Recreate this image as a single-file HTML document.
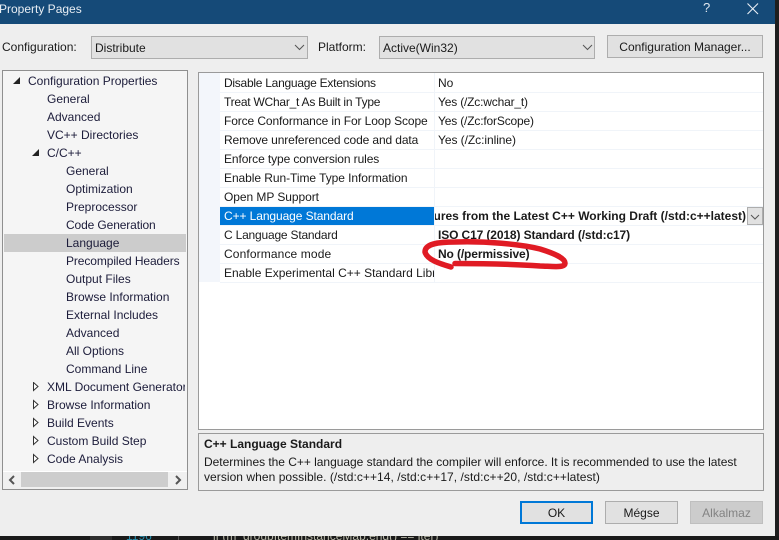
<!DOCTYPE html>
<html>
<head>
<meta charset="utf-8">
<style>
html,body{margin:0;padding:0;}
body{width:779px;height:540px;overflow:hidden;background:#1e1e1e;position:relative;font-family:"Liberation Sans",sans-serif;font-size:12px;color:#1a1a1a;}
div{position:absolute;box-sizing:border-box;white-space:nowrap;}
#dlg{left:0;top:0;width:775px;height:536px;background:#eeeeee;}
#title{left:0;top:0;width:775px;height:24px;background:#154a78;color:#e8eef4;line-height:18px;}
.dd{background:#e1e1e1;border:1px solid #adadad;height:23px;line-height:23px;}
.btn{background:#e1e1e1;border:1px solid #adadad;height:23px;line-height:23px;text-align:center;}
.t{line-height:18px;height:18px;color:#1c1c3a;}
.n{left:224px;line-height:19px;height:19px;}
.v{left:438px;line-height:19px;height:19px;}
.ln{left:220px;width:543px;height:1px;background:#f0f4f9;}
</style>
</head>
<body>
<div id="dlg"></div>
<div id="title"><span style="position:absolute;left:-1px;top:0;">Property Pages</span></div>
<div style="left:703px;top:0;color:#dfe7ef;line-height:16px;font-size:13px;">?</div>
<svg style="position:absolute;left:746px;top:2px;" width="14" height="14"><path d="M1.5 1.5L12 12M12 1.5L1.5 12" stroke="#e8eef4" stroke-width="1.1" fill="none"/></svg>

<div style="left:2px;top:38px;line-height:18px;">Configuration:</div>
<div class="dd" style="left:91px;top:36px;width:217px;padding-left:3px;">Distribute</div>
<svg style="position:absolute;left:294px;top:44px;" width="11" height="7"><path d="M1 1L5.5 5.5L10 1" stroke="#555" fill="none"/></svg>
<div style="left:318px;top:38px;line-height:18px;">Platform:</div>
<div class="dd" style="left:379px;top:36px;width:216px;padding-left:3px;">Active(Win32)</div>
<svg style="position:absolute;left:582px;top:44px;" width="11" height="7"><path d="M1 1L5.5 5.5L10 1" stroke="#555" fill="none"/></svg>
<div class="btn" style="left:607px;top:35px;width:156px;">Configuration Manager...</div>

<!-- tree -->
<div style="left:2px;top:70px;width:186px;height:420px;background:#f5f5f5;border:1px solid #8f8f8f;"></div>
<svg style="position:absolute;left:12px;top:77px;" width="9" height="8"><path d="M1 7H8V0Z" fill="#222"/></svg>
<svg style="position:absolute;left:31px;top:149px;" width="9" height="8"><path d="M1 7H8V0Z" fill="#222"/></svg>
<div class="t" style="left:28px;top:72px;">Configuration Properties</div>
<div class="t" style="left:47px;top:90px;">General</div>
<div class="t" style="left:47px;top:108px;">Advanced</div>
<div class="t" style="left:47px;top:126px;">VC++ Directories</div>
<div class="t" style="left:47px;top:144px;">C/C++</div>
<div class="t" style="left:66px;top:162px;">General</div>
<div class="t" style="left:66px;top:180px;">Optimization</div>
<div class="t" style="left:66px;top:198px;">Preprocessor</div>
<div class="t" style="left:66px;top:216px;letter-spacing:-.12px;">Code Generation</div>
<div style="left:4px;top:234px;width:182px;height:18px;background:#cccccc;"></div>
<div class="t" style="left:66px;top:234px;">Language</div>
<div class="t" style="left:66px;top:252px;letter-spacing:-.1px;">Precompiled Headers</div>
<div class="t" style="left:66px;top:270px;">Output Files</div>
<div class="t" style="left:66px;top:288px;">Browse Information</div>
<div class="t" style="left:66px;top:306px;">External Includes</div>
<div class="t" style="left:66px;top:324px;">Advanced</div>
<div class="t" style="left:66px;top:342px;">All Options</div>
<div class="t" style="left:66px;top:360px;">Command Line</div>
<div class="t" style="left:47px;top:378px;width:138px;overflow:hidden;">XML Document Generator</div>
<div class="t" style="left:47px;top:396px;">Browse Information</div>
<div class="t" style="left:47px;top:414px;">Build Events</div>
<div class="t" style="left:47px;top:432px;">Custom Build Step</div>
<div class="t" style="left:47px;top:450px;">Code Analysis</div>
<svg style="position:absolute;left:33px;top:382px;" width="6" height="90"><g fill="#fff" stroke="#333"><path d="M.5 .5L5 4.500L.5 8.500Z"/><path d="M.5 18.500L5 22.500L.5 26.500Z"/><path d="M.5 36.500L5 40.500L.5 44.500Z"/><path d="M.5 54.500L5 58.500L.5 62.500Z"/><path d="M.5 72.500L5 76.500L.5 80.500Z"/></g></svg>
<div style="left:3px;top:471px;width:184px;height:18px;background:#f0f0f0;border-top:1px solid #fff;"></div>
<div style="left:21px;top:472px;width:147px;height:15px;background:#cdcdcd;"></div>
<svg style="position:absolute;left:8px;top:475px;" width="8" height="10"><path d="M6 1L2 5L6 9" stroke="#555" stroke-width="2" fill="none"/></svg>
<svg style="position:absolute;left:174px;top:475px;" width="8" height="10"><path d="M2 1L6 5L2 9" stroke="#555" stroke-width="2" fill="none"/></svg>

<!-- grid -->
<div style="left:198px;top:72px;width:566px;height:358px;background:#fff;border:1px solid #9a9a9a;"></div>
<div style="left:199px;top:73px;width:21px;height:209px;background:#f3f6fb;"></div>
<div style="left:434px;top:73px;width:1px;height:209px;background:#f0f4f9;"></div>
<div class="ln" style="top:92px;"></div><div class="ln" style="top:111px;"></div><div class="ln" style="top:130px;"></div><div class="ln" style="top:149px;"></div><div class="ln" style="top:168px;"></div><div class="ln" style="top:187px;"></div><div class="ln" style="top:206px;"></div><div class="ln" style="top:225px;"></div><div class="ln" style="top:244px;"></div><div class="ln" style="top:263px;"></div><div class="ln" style="top:282px;"></div>
<div class="n" style="top:74px;letter-spacing:-.26px;">Disable Language Extensions</div><div class="v" style="top:74px;">No</div>
<div class="n" style="top:93px;letter-spacing:-.24px;">Treat WChar_t As Built in Type</div><div class="v" style="top:93px;letter-spacing:-.18px;">Yes (/Zc:wchar_t)</div>
<div class="n" style="top:112px;letter-spacing:-.11px;">Force Conformance in For Loop Scope</div><div class="v" style="top:112px;letter-spacing:-.17px;">Yes (/Zc:forScope)</div>
<div class="n" style="top:131px;letter-spacing:-.12px;">Remove unreferenced code and data</div><div class="v" style="top:131px;letter-spacing:-.06px;">Yes (/Zc:inline)</div>
<div class="n" style="top:150px;letter-spacing:-.1px;">Enforce type conversion rules</div>
<div class="n" style="top:169px;letter-spacing:-.06px;">Enable Run-Time Type Information</div>
<div class="n" style="top:188px;letter-spacing:-.06px;">Open MP Support</div>
<div style="left:220px;top:207px;width:214px;height:18px;background:#0078d7;"></div>
<div class="n" style="top:207px;color:#fff;letter-spacing:-.09px;">C++ Language Standard</div>
<div style="left:435px;top:207px;width:312px;height:18px;overflow:hidden;"><div style="right:1px;top:0;line-height:19px;font-weight:bold;">Preview - Features from the Latest C++ Working Draft (/std:c++latest)</div></div>
<div style="left:747px;top:207px;width:16px;height:18px;background:#e1e1e1;border:1px solid #adadad;"></div>
<svg style="position:absolute;left:750px;top:214px;" width="10" height="6"><path d="M1 1L5 5L9 1" stroke="#555" fill="none"/></svg>
<div class="n" style="top:226px;letter-spacing:-.2px;">C Language Standard</div><div class="v" style="top:226px;font-weight:bold;letter-spacing:-.12px;">ISO C17 (2018) Standard (/std:c17)</div>
<div class="n" style="top:245px;letter-spacing:.12px;">Conformance mode</div><div class="v" style="top:245px;font-weight:bold;letter-spacing:-.12px;">No (/permissive)</div>
<div class="n" style="top:264px;width:210px;overflow:hidden;">Enable Experimental C++ Standard Library Modules</div>

<svg style="position:absolute;left:415px;top:232px;" width="160" height="44"><path d="M36 35C26 32 12 28 10 20C10 12 22 10 40 10C70 9 105 12 125 17C138 21 150 26 150 31C150 36 140 34.500 125 34C90 31.500 60 31.500 40 31.500" fill="none" stroke="#e01b24" stroke-width="5.500" stroke-linecap="round" stroke-linejoin="round"/></svg>

<!-- description -->
<div style="left:198px;top:433px;width:566px;height:58px;border:1px solid #9a9a9a;background:#eeeeee;"></div>
<div style="left:204px;top:435px;line-height:18px;font-weight:bold;">C++ Language Standard</div>
<div style="left:204px;top:453px;line-height:18px;letter-spacing:-.03px;">Determines the C++ language standard the compiler will enforce. It is recommended to use the latest</div>
<div style="left:204px;top:468px;line-height:18px;letter-spacing:.05px;">version when possible. (/std:c++14, /std:c++17, /std:c++20, /std:c++latest)</div>

<div class="btn" style="left:520px;top:501px;width:73px;border:2px solid #0078d7;line-height:21px;">OK</div>
<div class="btn" style="left:605px;top:501px;width:73px;">Mégse</div>
<div class="btn" style="left:690px;top:501px;width:73px;background:#cccccc;border-color:#bfbfbf;color:#838383;">Alkalmaz</div>

<div style="left:0;top:536px;width:779px;height:4px;overflow:hidden;background:#1a1a1a;">
<div style="left:90px;top:0;width:22px;height:4px;background:#2e2e2e;"></div>
<div style="left:178px;top:0;width:1px;height:4px;background:#555;"></div>
<div style="left:126px;top:-8px;color:#2b91af;line-height:16px;">1196</div>
<div style="left:213px;top:-8px;color:#b8b8a8;line-height:16px;">if (m_groupItemInstanceMap.end() == iter)</div>
</div>
</body>
</html>
